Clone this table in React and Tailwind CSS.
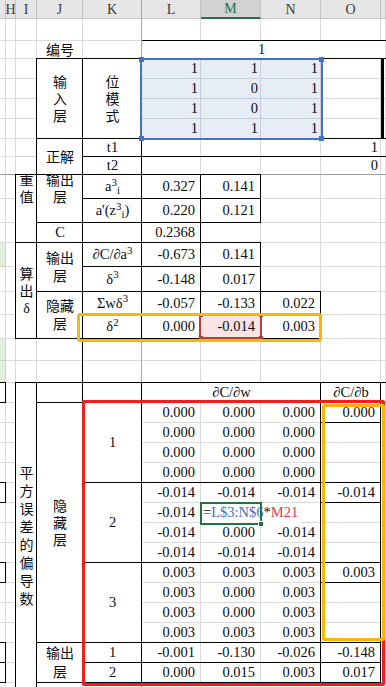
import React from "react";

// sheet rows: 0 = column header, 1..33 = visible rows
const ROWS =
  "grid-rows-[19px_22px_18px_20px_20px_20px_20px_18px_18px_24px_24px_20px_24px_25px_23px_24px_22px_22px_20px_repeat(12,20px)_20px_20px_20px]";
const COLS = "grid-cols-[6px_10px_21px_46px_59px_59px_60px_60px_60px_5px]";

const headers = ["", "H", "I", "J", "K", "L", "M", "N", "O", ""];

const bits = [
  [1, 1, 1],
  [1, 0, 1],
  [1, 0, 1],
  [1, 1, 1],
];

const mid = [
  { r: 9, L: "0.327", M: "0.141" },
  { r: 10, L: "0.220", M: "0.121" },
  { r: 11, L: "0.2368" },
  { r: 12, L: "-0.673", M: "0.141" },
  { r: 13, L: "-0.148", M: "0.017" },
  { r: 14, L: "-0.057", M: "-0.133", N: "0.022" },
  { r: 15, L: "0.000", M: "-0.014", N: "0.003" },
];

const grads = [
  ["0.000", "0.000", "0.000"],
  ["0.000", "0.000", "0.000"],
  ["0.000", "0.000", "0.000"],
  ["0.000", "0.000", "0.000"],
  ["-0.014", "-0.014", "-0.014"],
  ["-0.014", null, null],
  ["-0.014", "0.000", "-0.014"],
  ["-0.014", "-0.014", "-0.014"],
  ["0.003", "0.003", "0.003"],
  ["0.003", "0.000", "0.003"],
  ["0.003", "0.000", "0.003"],
  ["0.003", "0.003", "0.003"],
  ["-0.001", "-0.130", "-0.026"],
  ["0.000", "0.015", "0.003"],
];

const gradB = { 19: "0.000", 23: "-0.014", 27: "0.003", 31: "-0.148", 32: "0.017" };

const boxes = [
  [3, 4, 4, 1], [3, 5, 4, 1], [7, 4, 2, 1], [7, 5, 1, 1], [8, 5, 1, 1],
  [9, 3, 3, 1], [9, 4, 2, 1], [9, 5, 1, 1], [10, 5, 1, 1],
  [9, 6, 1, 1], [9, 7, 1, 1], [10, 6, 1, 1], [10, 7, 1, 1],
  [11, 4, 1, 1], [11, 6, 1, 1],
  [12, 3, 4, 1], [12, 4, 2, 1], [14, 4, 2, 1],
  [12, 5, 1, 1], [13, 5, 1, 1], [14, 5, 1, 1], [15, 5, 1, 1],
  [12, 6, 1, 1], [13, 6, 1, 1], [14, 6, 1, 1], [15, 6, 1, 1],
  [12, 7, 1, 1], [13, 7, 1, 1], [14, 7, 1, 1], [15, 7, 1, 1],
  [14, 8, 1, 1], [15, 8, 1, 1],
  [18, 3, 16, 1], [18, 4, 1, 1], [18, 5, 1, 1], [18, 6, 1, 3], [18, 9, 1, 1],
  [19, 4, 12, 1], [19, 5, 4, 1], [23, 5, 4, 1], [27, 5, 4, 1],
  [19, 6, 4, 3], [23, 6, 4, 3], [27, 6, 4, 3],
  [19, 9, 1, 1], [19, 9, 4, 1], [23, 9, 1, 1], [23, 9, 4, 1], [27, 9, 1, 1], [27, 9, 4, 1],
  [31, 4, 2, 1], [31, 5, 1, 1], [32, 5, 1, 1], [31, 6, 1, 3], [32, 6, 1, 3], [31, 9, 1, 1], [32, 9, 1, 1],
  [18, 1, 1, 1], [23, 1, 1, 1], [27, 1, 1, 1], [31, 1, 1, 1], [32, 1, 1, 1],
];

function At({ r, c, rs = 1, cs = 1, className = "", children }) {
  return (
    <div className={className} style={{ gridRow: `${r + 1} / span ${rs}`, gridColumn: `${c} / span ${cs}` }}>
      {children}
    </div>
  );
}

function Num({ r, c, v, className = "pr-[6px]" }) {
  return (
    <At r={r} c={c} className={`flex items-center justify-end whitespace-nowrap ${className}`}>
      {v}
    </At>
  );
}

function Label({ r, c, rs, cs, className = "", children }) {
  return (
    <At r={r} c={c} rs={rs} cs={cs} className={`flex items-center justify-center whitespace-nowrap ${className}`}>
      {children}
    </At>
  );
}

function Stack({ lines, className = "" }) {
  return (
    <div className={`flex flex-col items-center leading-[17px] text-[14px] ${className}`}>
      {lines.map((l, i) => (
        <span key={i}>{l}</span>
      ))}
    </div>
  );
}

function tone(r, c) {
  if (r >= 3 && r <= 6 && c >= 6 && c <= 8) return "bg-[#e7edf7] border-[#c6cedb]";
  if (c === 1 && (r === 12 || r === 16 || r === 17)) return "bg-[#e2efda] border-[#d0d0d0]";
  if (r === 15 && c === 7) return "bg-[#f8e4e4] border-[#dadada]";
  return "bg-white border-[#dadada]";
}

export default function App() {
  const grid = [];
  for (let r = 1; r <= 33; r++) {
    for (let c = 1; c <= 10; c++) {
      grid.push(<At key={`g${r}-${c}`} r={r} c={c} className={`border-r border-b ${tone(r, c)}`} />);
    }
  }

  return (
    <div className="h-[687px] w-[386px] overflow-hidden bg-white font-['Liberation_Serif','Noto_Sans_CJK_SC',serif] text-[14.5px] text-[#0c0c14]">
      <div className={`relative grid ${COLS} ${ROWS}`}>
        {headers.map((h, i) => (
          <At
            key={`h${i}`}
            r={0}
            c={i + 1}
            className={
              h === "M"
                ? "flex items-center justify-center border-r border-b-2 border-r-[#c4c4c4] border-b-[#217346] bg-[#d2d2d2] text-[14px] text-[#217346]"
                : "flex items-center justify-center border-r border-b border-[#c4c4c4] bg-[#e6e6e6] text-[14px] text-[#3a3a3a]"
            }
          >
            {h}
          </At>
        ))}

        {grid}

        {/* freeze lines */}
        <At r={8} c={1} cs={10} className="border-b border-[#9c9c9c]" />
        <At r={0} c={5} rs={34} className="border-r border-[#a4a4a4]" />

        {/* frozen block */}
        <Label r={2} c={4} className="text-[14px]">编号</Label>
        <Label r={2} c={6} cs={4} className="bg-white">1</Label>
        <Label r={3} c={4} rs={4} className="bg-white">
          <Stack lines={["输", "入", "层"]} />
        </Label>
        <Label r={3} c={5} rs={4} className="bg-white">
          <Stack lines={["位", "模", "式"]} />
        </Label>
        <Label r={7} c={4} rs={2} className="bg-white text-[14px]">正解</Label>
        <Label r={7} c={5}>t1</Label>
        <Label r={8} c={5}>t2</Label>
        <Num r={7} c={9} v="1" className="pr-[3px]" />
        <Num r={8} c={9} v="0" className="pr-[3px]" />
        {bits.map((row, i) =>
          row.map((v, j) => <Num key={`b${i}-${j}`} r={3 + i} c={6 + j} v={v} className="pr-[3px]" />)
        )}
        <At r={2} c={6} cs={5} className="-mt-px border-t border-b border-black" />
        <At r={3} c={9} rs={4} cs={2} className="-mt-px border-t border-b border-black" />
        <At r={3} c={10} rs={4} className="-mt-px border-l-[3px] border-black" />
        <At r={7} c={6} cs={5} className="-mt-px border-t border-b border-black" />

        {/* scrolled block */}
        <At r={9} c={3} rs={3} className="overflow-hidden bg-white">
          <Stack lines={["重", "值"]} className="-mt-[3px]" />
        </At>
        <At r={9} c={4} rs={2} className="overflow-hidden bg-white">
          <Stack lines={["输出", "层"]} className="-mt-[3px]" />
        </At>
        <Label r={9} c={5}>
          a<sup>3</sup>
          <sub>i</sub>
        </Label>
        <Label r={10} c={5}>
          a'(z<sup>3</sup>
          <sub>i</sub>)
        </Label>
        <Label r={11} c={4}>C</Label>
        <Label r={12} c={3} rs={4} className="bg-white">
          <Stack lines={["算", "出", "δ"]} />
        </Label>
        <Label r={12} c={4} rs={2} className="bg-white">
          <Stack lines={["输出", "层"]} className="leading-[18px]" />
        </Label>
        <Label r={14} c={4} rs={2} className="bg-white">
          <Stack lines={["隐藏", "层"]} className="leading-[18px]" />
        </Label>
        <Label r={12} c={5}>
          ∂C/∂a<sup>3</sup>
        </Label>
        <Label r={13} c={5}>
          δ<sup>3</sup>
        </Label>
        <Label r={14} c={5}>
          Σwδ<sup>3</sup>
        </Label>
        <Label r={15} c={5}>
          δ<sup>2</sup>
        </Label>
        {mid.map((m) => (
          <React.Fragment key={`m${m.r}`}>
            {m.L && <Num r={m.r} c={6} v={m.L} />}
            {m.M && <Num r={m.r} c={7} v={m.M} />}
            {m.N && <Num r={m.r} c={8} v={m.N} />}
          </React.Fragment>
        ))}
        <At r={16} c={4} rs={2} className="border-r border-black" />

        <At r={18} c={3} rs={16} className="bg-white pt-[82px]">
          <Stack lines={["平", "方", "误", "差", "的", "偏", "导", "数"]} className="leading-[18px]" />
        </At>
        <Label r={18} c={6} cs={3} className="bg-white">∂C/∂w</Label>
        <Label r={18} c={9}>∂C/∂b</Label>
        <Label r={19} c={4} rs={12} className="bg-white">
          <Stack lines={["隐", "藏", "层"]} />
        </Label>
        <Label r={19} c={5} rs={4} className="bg-white">1</Label>
        <Label r={23} c={5} rs={4} className="bg-white">2</Label>
        <Label r={27} c={5} rs={4} className="bg-white">3</Label>
        <Label r={31} c={4} rs={2} className="bg-white">
          <Stack lines={["输出", "层"]} className="leading-[19px]" />
        </Label>
        <Label r={31} c={5}>1</Label>
        <Label r={32} c={5}>2</Label>
        {grads.map((row, i) =>
          row.map((v, j) => (v ? <Num key={`d${i}-${j}`} r={19 + i} c={6 + j} v={v} /> : null))
        )}
        {Object.entries(gradB).map(([r, v]) => (
          <Num key={`o${r}`} r={Number(r)} c={9} v={v} />
        ))}
        <At r={18} c={10} className="-mt-px border-t border-black" />

        {boxes.map(([r, c, rs, cs], i) => (
          <At key={`x${i}`} r={r} c={c} rs={rs} cs={cs} className="-mt-px -ml-px border border-black" />
        ))}

        {/* cell being edited */}
        <At r={24} c={7} cs={2} className="z-10 flex">
          <span className="flex h-full items-center whitespace-nowrap bg-white pl-[2px] pr-[4px]">
            =<span className="text-[#4472c4]">L$3:N$6</span>*<span className="text-[#d9414d]">M21</span>
          </span>
        </At>

        {/* range highlights */}
        <div className="absolute left-[140px] top-[58px] z-20 h-[82px] w-[183px] border-2 border-[#4472c4]" />
        <div className="absolute left-[139px] top-[57px] z-20 h-[5px] w-[5px] bg-[#4472c4]" />
        <div className="absolute left-[319px] top-[57px] z-20 h-[5px] w-[5px] bg-[#4472c4]" />
        <div className="absolute left-[139px] top-[136px] z-20 h-[5px] w-[5px] bg-[#4472c4]" />
        <div className="absolute left-[319px] top-[136px] z-20 h-[5px] w-[5px] bg-[#4472c4]" />

        <div className="absolute left-[199px] top-[314px] z-20 h-[25px] w-[63px] border-2 border-[#b93c3c]" />
        <div className="absolute left-[199px] top-[313px] z-20 h-[4px] w-[4px] bg-[#b93c3c]" />
        <div className="absolute left-[259px] top-[313px] z-20 h-[4px] w-[4px] bg-[#b93c3c]" />
        <div className="absolute left-[199px] top-[336px] z-20 h-[4px] w-[4px] bg-[#b93c3c]" />
        <div className="absolute left-[259px] top-[336px] z-20 h-[4px] w-[4px] bg-[#b93c3c]" />

        <div className="absolute left-[200px] top-[502px] z-20 h-[23px] w-[62px] border-2 border-[#217346]" />
        <div className="absolute left-[258px] top-[521px] z-20 h-[6px] w-[6px] border border-white bg-[#217346]" />

        {/* annotation marks */}
        <div className="absolute left-[82px] top-[400px] z-20 h-[286px] w-[303px] rounded-[2px] border-[3px] border-[#f21d1d]" />
        <div className="absolute left-[77px] top-[313px] z-30 h-[29px] w-[245px] rounded-[3px] border-[3px] border-[#f8b704]" />
        <div className="absolute left-[322px] top-[404px] z-30 h-[237px] w-[63px] rounded-[2px] border-[3px] border-[#f8b704]" />
      </div>
    </div>
  );
}
